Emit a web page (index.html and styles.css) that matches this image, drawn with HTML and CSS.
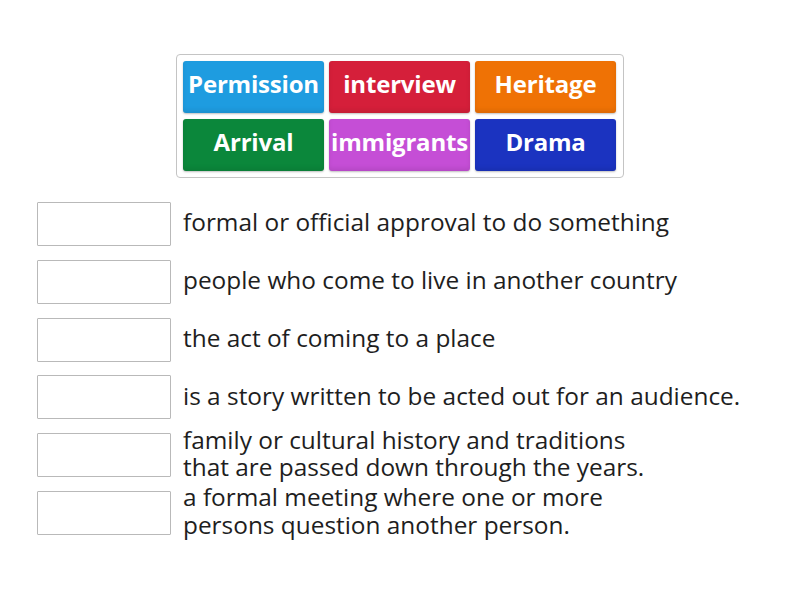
FILE: index.html
```html
<!DOCTYPE html>
<html lang="en">
<head>
<meta charset="utf-8">
<title>Match up</title>
<link rel="stylesheet" href="styles.css">
</head>
<body>
<div class="page">
  <div class="bank">
    <div class="tile blue">Permission</div>
    <div class="tile red">interview</div>
    <div class="tile orange">Heritage</div>
    <div class="tile green">Arrival</div>
    <div class="tile purple">immigrants</div>
    <div class="tile navy">Drama</div>
  </div>
  <div class="rows">
    <div class="row"><div class="slot"></div><div class="def">formal or official approval to do something</div></div>
    <div class="row"><div class="slot"></div><div class="def">people who come to live in another country</div></div>
    <div class="row"><div class="slot"></div><div class="def">the act of coming to a place</div></div>
    <div class="row"><div class="slot"></div><div class="def">is a story written to be acted out for an audience.</div></div>
    <div class="row"><div class="slot"></div><div class="def">family or cultural history and traditions<br>that are passed down through the years.</div></div>
    <div class="row"><div class="slot"></div><div class="def">a formal meeting where one or more<br>persons question another person.</div></div>
  </div>
</div>
</body>
</html>
```
FILE: styles.css
```css
html, body {
  margin: 0;
  padding: 0;
  background: #ffffff;
}
body {
  font-family: "Open Sans", "Liberation Sans", sans-serif;
  color: #222222;
}
.page {
  width: 800px;
  height: 600px;
  padding-top: 54px;
  box-sizing: border-box;
}
.bank {
  width: fit-content;
  margin: 0 auto;
  display: grid;
  grid-template-columns: repeat(3, 141px);
  grid-auto-rows: 52px;
  column-gap: 5px;
  row-gap: 6px;
  padding: 6px 7px 6px 6px;
  border: 1px solid #c4c4c4;
  border-radius: 4px;
  background: #ffffff;
}
.tile {
  display: flex;
  align-items: center;
  justify-content: center;
  color: #ffffff;
  font-weight: 700;
  font-size: 24px;
  border-radius: 3px;
  box-shadow: 0 1px 2px rgba(0,0,0,0.25), inset 0 -3px 4px rgba(0,0,0,0.08);
  white-space: nowrap;
  letter-spacing: -0.2px;
  padding-bottom: 7px;
  box-sizing: border-box;
}
.blue { background: #1e9ce0; }
.red { background: #d51f3a; }
.orange { background: #ef7205; }
.green { background: #0b873b; }
.purple { background: #c54ed6; }
.navy { background: #1b33c0; }
.rows {
  margin-top: 24px;
  padding-left: 37px;
  display: flex;
  flex-direction: column;
  gap: 13.8px;
}
.row {
  display: flex;
  align-items: center;
  height: 44px;
  gap: 12px;
}
.slot {
  width: 134px;
  height: 44px;
  box-sizing: border-box;
  border: 1px solid #b9b9b9;
  border-radius: 1px;
  background: #ffffff;
  flex: none;
}
.def {
  font-size: 24.4px;
  line-height: 27.5px;
  color: #1e1e1e;
  padding-bottom: 4px;
  white-space: nowrap;
}
```
